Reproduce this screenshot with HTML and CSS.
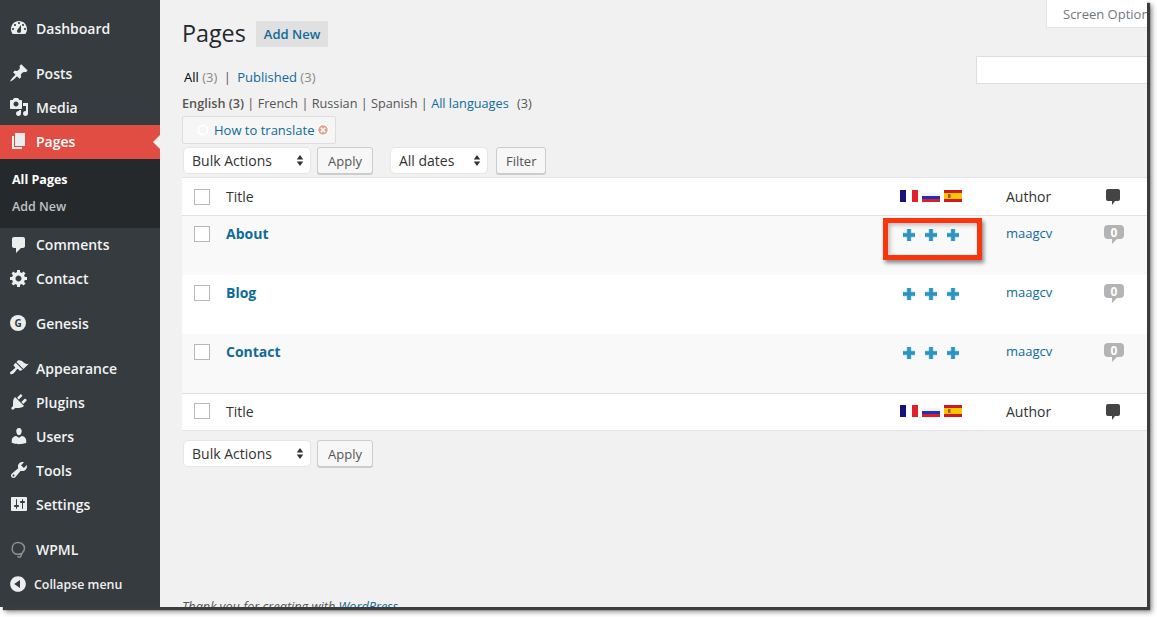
FILE: index.html
```html
<!DOCTYPE html>
<html lang="en">
<head>
<meta charset="utf-8">
<title>Pages</title>
<link rel="stylesheet" href="styles.css">
</head>
<body>
<div class="window">
  <nav class="sidebar">
    <a class="item first"><svg class="ico" viewBox="0 0 20 20"><path fill-rule="evenodd" d="M3.76 16h12.48c1.1-1.37 1.76-3.11 1.76-5 0-4.42-3.58-8-8-8s-8 3.58-8 8c0 1.89.66 3.63 1.76 5zM10 4c.55 0 1 .45 1 1s-.45 1-1 1-1-.45-1-1 .45-1 1-1zM6 6c.55 0 1 .45 1 1s-.45 1-1 1-1-.45-1-1 .45-1 1-1zm8 0c.55 0 1 .45 1 1s-.45 1-1 1-1-.45-1-1 .45-1 1-1zm-5.37 5.55L12 7v6c0 1.1-.9 2-2 2s-2-.9-2-2c0-.57.24-1.08.63-1.45zM4 10c.55 0 1 .45 1 1s-.45 1-1 1-1-.45-1-1 .45-1 1-1zm12 0c.55 0 1 .45 1 1s-.45 1-1 1-1-.45-1-1 .45-1 1-1z"/></svg>Dashboard</a>
    <a class="item gap"><svg class="ico" viewBox="0 0 20 20"><path d="M10.44 3.02l1.82-1.82 6.36 6.35-1.83 1.82c-1.05-.68-2.48-.57-3.41.36l-.75.75c-.92.93-1.04 2.35-.35 3.41l-1.83 1.82-2.41-2.41-2.8 2.79c-.42.42-3.38 2.71-3.8 2.29s1.86-3.39 2.28-3.81l2.79-2.79L4.1 9.36l1.83-1.82c1.05.69 2.48.57 3.4-.36l.75-.75c.93-.92 1.05-2.35.36-3.41z"/></svg>Posts</a>
    <a class="item"><svg class="ico" viewBox="0 0 20 20"><path fill-rule="evenodd" d="M13 11V4c0-.55-.45-1-1-1h-1.67L9 1H5L3.67 3H2c-.55 0-1 .45-1 1v7c0 .55.45 1 1 1h10c.55 0 1-.45 1-1zM7 4.5c1.38 0 2.5 1.12 2.5 2.5S8.38 9.5 7 9.5 4.5 8.38 4.5 7 5.62 4.5 7 4.5zM14 6h5v10.5c0 1.38-1.12 2.5-2.5 2.5S14 17.88 14 16.5s1.12-2.5 2.5-2.5c.17 0 .34.02.5.05V9h-3V6zm-4 8.05V13h2v3.5c0 1.38-1.12 2.5-2.5 2.5S7 17.88 7 16.5 8.12 14 9.5 14c.17 0 .34.02.5.05z"/></svg>Media</a>
    <a class="item active"><svg class="ico" viewBox="0 0 20 20"><path d="M6 15V2h10v13H6zm-1 1h8v2H3V5h2v11z"/></svg>Pages</a>
    <div class="submenu">
      <a class="sub current">All Pages</a>
      <a class="sub">Add New</a>
    </div>
    <a class="item after-sub"><svg class="ico" viewBox="0 0 20 20"><path d="M5 2h9c1.1 0 2 .9 2 2v7c0 1.1-.9 2-2 2h-2l-5 5v-5H5c-1.1 0-2-.9-2-2V4c0-1.1.9-2 2-2z"/></svg>Comments</a>
    <a class="item"><svg class="ico" viewBox="0 0 20 20"><path fill-rule="evenodd" d="M18 12h-2.18c-.17.7-.44 1.35-.81 1.93l1.54 1.54-2.1 2.1-1.54-1.54c-.58.36-1.23.63-1.91.79V19H8v-2.18c-.68-.16-1.33-.43-1.91-.79l-1.54 1.54-2.12-2.12 1.54-1.54c-.36-.58-.63-1.23-.79-1.91H1V9.03h2.17c.16-.7.44-1.35.8-1.94L2.43 5.55l2.1-2.1 1.54 1.54c.58-.37 1.24-.64 1.93-.81V2h3v2.18c.68.16 1.33.43 1.91.79l1.54-1.54 2.12 2.12-1.54 1.54c.36.59.64 1.24.8 1.94H18V12zm-8.5 1.5c1.66 0 3-1.34 3-3s-1.34-3-3-3-3 1.34-3 3 1.34 3 3 3z"/></svg>Contact</a>
    <a class="item gap"><svg class="ico" viewBox="0 0 20 20"><circle cx="9" cy="10" r="8"/><text class="g-letter" x="9" y="13.500">G</text></svg>Genesis</a>
    <a class="item gap"><svg class="ico" viewBox="0 0 20 20"><path d="M14.480 11.060L7.410 3.990l1.500-1.500c.5-.56 2.300-.47 3.510.32 1.210.8 1.430 1.280 2.910 2.100 1.180.64 2.450 1.260 4.450.85zm-.71.71L6.700 4.700 4.930 6.470c-.39.39-.39 1.020 0 1.410l1.060 1.060c.39.39.39 1.030 0 1.420-.6.6-1.430 1.110-2.210 1.690-.35.26-.7.53-1.010.84C1.430 13.230.4 14.950 1.400 15.950c.99 1 2.720-.03 4.040-1.360.31-.31.58-.66.85-1.020.57-.78 1.080-1.610 1.690-2.210.39-.39 1.020-.39 1.410 0l1.060 1.060c.39.39 1.020.39 1.410 0z"/></svg>Appearance</a>
    <a class="item"><svg class="ico" viewBox="0 0 20 20"><path d="M13.110 4.360L9.870 7.600 8 5.730l3.240-3.240c.35-.34 1.050-.2 1.560.32.52.51.66 1.210.31 1.550zm-8 1.770l.91-1.120 9.010 9.010-1.190.84c-.71.71-2.630 1.160-3.820 1.160H6.140L4.900 17.260c-.59.59-1.540.59-2.120 0-.59-.58-.59-1.530 0-2.120l1.240-1.240v-3.880c0-1.130.4-3.190 1.090-3.890zm7.260 3.970l3.240-3.240c.34-.35 1.040-.21 1.550.31.52.51.66 1.210.31 1.550l-3.240 3.250z"/></svg>Plugins</a>
    <a class="item"><svg class="ico" viewBox="0 0 20 20"><path d="M10 9.250c-2.270 0-2.730-3.440-2.730-3.440C7 4.020 7.820 2 9.970 2c2.160 0 2.980 2.020 2.710 3.810 0 0-.41 3.440-2.680 3.440zm0 2.570L12.720 10c2.390 0 4.520 2.330 4.520 4.530v2.490s-3.650 1.130-7.240 1.130c-3.650 0-7.240-1.130-7.240-1.130v-2.490c0-2.250 1.940-4.480 4.470-4.480z"/></svg>Users</a>
    <a class="item"><svg class="ico" viewBox="0 0 20 20"><path fill-rule="evenodd" d="M16.680 9.770c-1.340 1.340-3.300 1.670-4.950.99l-5.410 6.520c-.99.99-2.590.99-3.580 0s-.99-2.590 0-3.570l6.520-5.420c-.68-1.650-.35-3.610.99-4.950 1.280-1.280 3.120-1.620 4.720-1.060l-2.890 2.890 2.820 2.820 2.860-2.870c.53 1.580.18 3.390-1.080 4.670zM3.810 16.210c.4.39 1.040.39 1.430 0 .4-.4.4-1.040 0-1.430-.39-.4-1.030-.4-1.430 0-.39.39-.39 1.030 0 1.430z"/></svg>Tools</a>
    <a class="item"><svg class="ico" viewBox="0 0 20 20"><path fill-rule="evenodd" d="M18 16V4c0-.55-.45-1-1-1H3c-.55 0-1 .45-1 1v12c0 .55.45 1 1 1h14c.55 0 1-.45 1-1zM8 11h1c.55 0 1 .45 1 1s-.45 1-1 1H8v1.500c0 .28-.22.5-.5.5s-.5-.22-.5-.5V13H6c-.55 0-1-.45-1-1s.45-1 1-1h1V5.500c0-.28.22-.5.5-.5s.5.22.5.5V11zm5-2h-1c-.55 0-1-.45-1-1s.45-1 1-1h1V5.500c0-.28.22-.5.5-.5s.5.22.5.5V7h1c.55 0 1 .45 1 1s-.45 1-1 1h-1v5.500c0 .28-.22.5-.5.5s-.5-.22-.5-.5V9z"/></svg>Settings</a>
    <a class="item gap"><svg class="ico wpml" viewBox="0 0 20 20"><path d="M12.500 14.500c-1 .5-2 .8-3.500.8-3.500 0-5.800-2.300-5.800-5.800S5.500 3.500 9 3.500s6.500 2.500 6.500 5.800c0 2-1 3.500-2.200 4.700-1 1-.8 2.800-2 3.800-1 .8-2.300.3-2.600-.8"/></svg>WPML</a>
    <a class="collapse"><svg class="ico" viewBox="0 0 20 20"><path fill-rule="evenodd" d="M10 2.160c4.330 0 7.840 3.510 7.840 7.840s-3.510 7.840-7.840 7.840S2.160 14.330 2.160 10 5.710 2.160 10 2.160zm2 11.720V6.120L6.180 9.970z"/></svg>Collapse menu</a>
  </nav>
  <main class="main">
    <div class="screen-tab">Screen Options</div>
    <header class="title-row">
      <h1 class="title">Pages</h1>
      <a class="add-new">Add New</a>
    </header>
    <div class="status-row">
      <p class="status"><b class="on">All</b> <span class="count">(3)</span> <span class="sep">|</span> <a class="link">Published</a> <span class="count">(3)</span></p>
      <div class="search"></div>
    </div>
    <p class="langs"><b>English (3)</b> | French | Russian | Spanish | <a class="link">All languages</a> <span class="lang-count">(3)</span></p>
    <div class="howto">
      <svg class="howto-ico" viewBox="0 0 20 20"><path d="M12.500 14.500c-1 .5-2 .8-3.500.8-3.500 0-5.800-2.300-5.800-5.800S5.500 3.500 9 3.500s6.500 2.500 6.500 5.800c0 2-1 3.500-2.200 4.700"/></svg>
      <a class="link">How to translate</a>
      <svg class="close-ico" viewBox="0 0 12 12"><circle cx="6" cy="6" r="5.500"/><path d="M3.800 3.800l4.400 4.400M8.200 3.800L3.800 8.200"/></svg>
    </div>
    <div class="actions">
      <div class="select bulk">Bulk Actions<svg class="updown" viewBox="0 0 8 14"><path d="M4 1l3.500 5h-7zM4 13L.5 8h7z"/></svg></div>
      <div class="btn">Apply</div>
      <div class="select dates">All dates<svg class="updown" viewBox="0 0 8 14"><path d="M4 1l3.500 5h-7zM4 13L.5 8h7z"/></svg></div>
      <div class="btn filter">Filter</div>
    </div>
    <section class="table">
      <div class="row head">
        <span class="check"></span><span class="cell">Title</span>
        <span class="flags">
          <svg class="flag" viewBox="0 0 18 12"><rect width="6" height="12" fill="#14147a"/><rect x="6" width="6" height="12" fill="#fff"/><rect x="12" width="6" height="12" fill="#e0202c"/></svg>
          <svg class="flag ru" viewBox="0 0 18 9"><rect width="18" height="3" fill="#f4f4f8"/><rect y="3" width="18" height="3" fill="#2230b8"/><rect y="6" width="18" height="3" fill="#d8202c"/></svg>
          <svg class="flag" viewBox="0 0 18 12"><rect width="18" height="12" fill="#cf1b1e"/><rect y="3" width="18" height="6" fill="#f6c700"/><rect x="4" y="4.200" width="2.500" height="3.600" fill="#b5401a"/></svg>
        </span>
        <span class="cell">Author</span>
        <svg class="bubble dark" viewBox="0 0 14 16"><path d="M2 0h10a2 2 0 0 1 2 2v8a2 2 0 0 1-2 2H9l-3 4v-4H2a2 2 0 0 1-2-2V2a2 2 0 0 1 2-2z"/></svg>
      </div>
      <div class="row page odd">
        <span class="check"></span><a class="page-title">About</a>
        <span class="plus-col">
          <svg class="plus" viewBox="0 0 12 12"><path d="M4.200 0h3.600v4.200H12v3.600H7.800V12H4.200V7.800H0V4.200h4.200z"/></svg><svg class="plus" viewBox="0 0 12 12"><path d="M4.200 0h3.600v4.200H12v3.600H7.800V12H4.200V7.800H0V4.200h4.200z"/></svg><svg class="plus" viewBox="0 0 12 12"><path d="M4.200 0h3.600v4.200H12v3.600H7.800V12H4.200V7.800H0V4.200h4.200z"/></svg>
          <span class="annotation"></span>
        </span>
        <a class="author">maagcv</a>
        <span class="count-bubble"><span class="count-num">0</span></span>
      </div>
      <div class="row page">
        <span class="check"></span><a class="page-title">Blog</a>
        <span class="plus-col">
          <svg class="plus" viewBox="0 0 12 12"><path d="M4.200 0h3.600v4.200H12v3.600H7.800V12H4.200V7.800H0V4.200h4.200z"/></svg><svg class="plus" viewBox="0 0 12 12"><path d="M4.200 0h3.600v4.200H12v3.600H7.800V12H4.200V7.800H0V4.200h4.200z"/></svg><svg class="plus" viewBox="0 0 12 12"><path d="M4.200 0h3.600v4.200H12v3.600H7.800V12H4.200V7.800H0V4.200h4.200z"/></svg>
        </span>
        <a class="author">maagcv</a>
        <span class="count-bubble"><span class="count-num">0</span></span>
      </div>
      <div class="row page odd">
        <span class="check"></span><a class="page-title">Contact</a>
        <span class="plus-col">
          <svg class="plus" viewBox="0 0 12 12"><path d="M4.200 0h3.600v4.200H12v3.600H7.800V12H4.200V7.800H0V4.200h4.200z"/></svg><svg class="plus" viewBox="0 0 12 12"><path d="M4.200 0h3.600v4.200H12v3.600H7.800V12H4.200V7.800H0V4.200h4.200z"/></svg><svg class="plus" viewBox="0 0 12 12"><path d="M4.200 0h3.600v4.200H12v3.600H7.800V12H4.200V7.800H0V4.200h4.200z"/></svg>
        </span>
        <a class="author">maagcv</a>
        <span class="count-bubble"><span class="count-num">0</span></span>
      </div>
      <div class="row head foot">
        <span class="check"></span><span class="cell">Title</span>
        <span class="flags">
          <svg class="flag" viewBox="0 0 18 12"><rect width="6" height="12" fill="#14147a"/><rect x="6" width="6" height="12" fill="#fff"/><rect x="12" width="6" height="12" fill="#e0202c"/></svg>
          <svg class="flag ru" viewBox="0 0 18 9"><rect width="18" height="3" fill="#f4f4f8"/><rect y="3" width="18" height="3" fill="#2230b8"/><rect y="6" width="18" height="3" fill="#d8202c"/></svg>
          <svg class="flag" viewBox="0 0 18 12"><rect width="18" height="12" fill="#cf1b1e"/><rect y="3" width="18" height="6" fill="#f6c700"/><rect x="4" y="4.200" width="2.500" height="3.600" fill="#b5401a"/></svg>
        </span>
        <span class="cell">Author</span>
        <svg class="bubble dark" viewBox="0 0 14 16"><path d="M2 0h10a2 2 0 0 1 2 2v8a2 2 0 0 1-2 2H9l-3 4v-4H2a2 2 0 0 1-2-2V2a2 2 0 0 1 2-2z"/></svg>
      </div>
    </section>
    <div class="actions bottom">
      <div class="select bulk">Bulk Actions<svg class="updown" viewBox="0 0 8 14"><path d="M4 1l3.500 5h-7zM4 13L.5 8h7z"/></svg></div>
      <div class="btn">Apply</div>
    </div>
    <footer class="thanks">Thank you for creating with <a class="link">WordPress</a>.</footer>
  </main>
</div>
</body>
</html>
```
FILE: styles.css
```css
* { box-sizing: border-box; }
html, body { margin: 0; height: 100%; background: #fff; }
body { font-family: "Open Sans", "Liberation Sans", sans-serif; color: #444; font-size: 13px; }
p, h1 { margin: 0; }

.window {
  display: flex;
  width: 1147px;
  height: 607px;
  overflow: hidden;
  background: #f1f1f1;
  box-shadow: 3px 3px 1px #3c3c3c, 5px 5px 5px rgba(0, 0, 0, .45);
}

/* sidebar */
.sidebar {
  flex: 0 0 160px;
  display: flex;
  flex-direction: column;
  padding-top: 11px;
  background: #363b3f;
  color: #fff;
}
.item {
  position: relative;
  display: flex;
  align-items: center;
  flex: 0 0 34px;
  padding-left: 9px;
  font-size: 14px;
  font-weight: 600;
  color: #f2f3f3;
}
.gap { margin-top: 11px; }
.after-sub { flex-basis: 33px; }
.ico { flex: 0 0 20px; width: 20px; height: 20px; margin-right: 7px; fill: #eceded; }
.g-letter { font-size: 10px; font-weight: 700; text-anchor: middle; fill: #363b3f; }
.active { margin-top: 1px; padding-bottom: 2px; background: #e14d43; color: #fff; }
.active::after {
  content: "";
  position: absolute;
  right: 0;
  top: 10px;
  border: 7px solid transparent;
  border-right-color: #f1f1f1;
  border-left-width: 0;
}
.submenu {
  display: flex;
  flex-direction: column;
  height: 69px;
  padding: 7px 0 0 12px;
  background: #26292c;
}
.sub { height: 27px; line-height: 27px; font-size: 12.500px; font-weight: 600; color: #bfc1c2; }
.sub.current { color: #fff; font-weight: 700; }
.wpml { fill: none; stroke: #8d9093; stroke-width: 1.500; }
.collapse {
  display: flex;
  align-items: center;
  height: 34px;
  margin-top: 1px;
  padding-left: 8px;
  font-size: 12.400px;
  font-weight: 600;
  color: #f0f0f0;
}
.collapse .ico { margin-right: 6px; }

/* main */
.main {
  position: relative;
  flex: 1;
  min-width: 0;
  display: flex;
  flex-direction: column;
  padding: 17px 0 0 22px;
  overflow: hidden;
}
.screen-tab {
  position: absolute;
  top: 0;
  left: 886px;
  width: 140px;
  height: 28px;
  padding: 5px 0 0 16px;
  background: #fff;
  border-left: 1px solid #e4e4e4;
  border-bottom: 1px solid #e4e4e4;
  font-size: 13px;
  color: #72777c;
  white-space: nowrap;
}
.title-row { display: flex; align-items: center; height: 32px; }
.title { font-size: 23.300px; font-weight: 400; line-height: 32px; color: #23282d; }
.add-new {
  display: block;
  margin: 2px 0 0 10px;
  padding: 0 8px;
  height: 26px;
  line-height: 26px;
  width: 72px;
  background: #e0e0e0;
  color: #0f6b9a;
  font-size: 13px;
  font-weight: 600;
  white-space: nowrap;
}
.status-row { display: flex; align-items: flex-start; justify-content: space-between; height: 28px; margin-top: 7px; }
.status { margin-top: 12px; font-size: 13px; padding-left: 2px; color: #555; }
.on { font-weight: 400; color: #000; }
.count { color: #888; }
.sep { margin: 0 3px; }
.link { color: #0f6b9a; }
.search {
  flex: 0 0 190px;
  height: 28px;
  margin-right: -19px;
  background: #fff;
  border: 1px solid #ddd;
}
.langs { margin-top: 9px; height: 20px; line-height: 20px; font-size: 12.700px; color: #555; white-space: nowrap; }
.langs b { font-weight: 600; color: #555; }
.lang-count { margin-left: 5px; }
.howto {
  display: flex;
  align-items: center;
  width: 154px;
  height: 28px;
  margin-top: 3px;
  padding-left: 13px;
  background: #f6f6f6;
  border: 1px solid #ddd;
  border-radius: 2px;
  font-size: 13px;
}
.howto-ico { width: 15px; height: 15px; margin-right: 3px; fill: none; stroke: #fff; stroke-width: 2.500; }
.close-ico { width: 12px; height: 12px; margin-left: 3px; fill: #e0a48c; stroke: #fff; stroke-width: 1.500; }
.actions { display: flex; align-items: center; height: 27px; margin-top: 3px; }
.select {
  display: flex;
  align-items: center;
  justify-content: space-between;
  height: 27px;
  padding: 0 6px 0 8px;
  background: #fff;
  border: 1px solid #e6e6e6;
  border-radius: 5px;
  font-size: 14px;
  color: #333;
}
.bulk { width: 128px; margin-left: 1px; }
.dates { width: 98px; margin-left: 17px; }
.updown { width: 8px; height: 13px; fill: #333; }
.btn {
  height: 27px;
  line-height: 26px;
  margin-left: 6px;
  padding: 0 10px;
  background: #f7f7f7;
  border: 1px solid #ccc;
  border-radius: 3px;
  box-shadow: 0 1px 0 #ccc;
  font-size: 13px;
  color: #555;
}
.filter { margin-left: 8px; padding: 0 9px; }

/* table */
.table { width: 990px; margin-top: 3px; border: 1px solid #e5e5e5; border-width: 1px 0; background: #fff; }
.row {
  display: grid;
  grid-template-columns: 44px 673px 107px 100px 60px;
  background: #fff;
}
.head { height: 38px; align-items: center; border-bottom: 1px solid #e1e1e1; }
.foot { height: 37px; padding-bottom: 2px; border-bottom: 0; border-top: 1px solid #e1e1e1; }
.page { height: 59px; padding-top: 8px; }
.odd { background: #f9f9f9; }
.check {
  width: 16px;
  height: 16px;
  margin: 2px 0 0 12px;
  background: #fff;
  border: 1px solid #b4b9be;
}
.head .check { margin-top: 0; }
.cell { font-size: 14px; color: #333; }
.flags { display: flex; align-items: flex-end; gap: 4px; height: 12px; margin: -1px 0 0 1px; }
.flag { width: 18px; height: 12px; display: block; }
.flag.ru { height: 9px; }
.page-title { font-size: 14px; font-weight: 700; color: #0f6b9a; line-height: 20px; }
.author { font-size: 13px; color: #0f6b9a; line-height: 20px; margin-top: -1px; }
.plus-col { position: relative; display: flex; gap: 10px; padding: 5px 0 0 4px; }
.plus { width: 12px; height: 12px; fill: #2a95c5; stroke: #2a95c5; stroke-width: .5; stroke-linejoin: round; }
.annotation {
  position: absolute;
  left: -16px;
  top: -6px;
  width: 99px;
  height: 42px;
  border: 5px solid #f9350d;
  box-shadow: 2px 3px 4px rgba(0, 0, 0, .45), inset 2px 2px 4px rgba(0, 0, 0, .25);
}
.bubble { width: 14px; height: 16px; margin-top: 1px; }
.dark { fill: #444; }
.count-bubble {
  position: relative;
  display: block;
  width: 20px;
  height: 14px;
  margin-top: 1px;
  margin-left: -2px;
  background: #b4b4b4;
  border-radius: 4px;
  text-align: center;
  line-height: 14px;
}
.count-bubble::after {
  content: "";
  position: absolute;
  left: 8px;
  top: 14px;
  border-style: solid;
  border-width: 5px 5px 0 0;
  border-color: #b4b4b4 transparent transparent transparent;
}
.count-num { font-size: 12px; font-weight: 700; color: #fff; }
.bottom { margin-top: 9px; }
.thanks { margin-top: auto; margin-bottom: -8px; font-size: 12.700px; font-style: italic; color: #555; white-space: nowrap; }
```
